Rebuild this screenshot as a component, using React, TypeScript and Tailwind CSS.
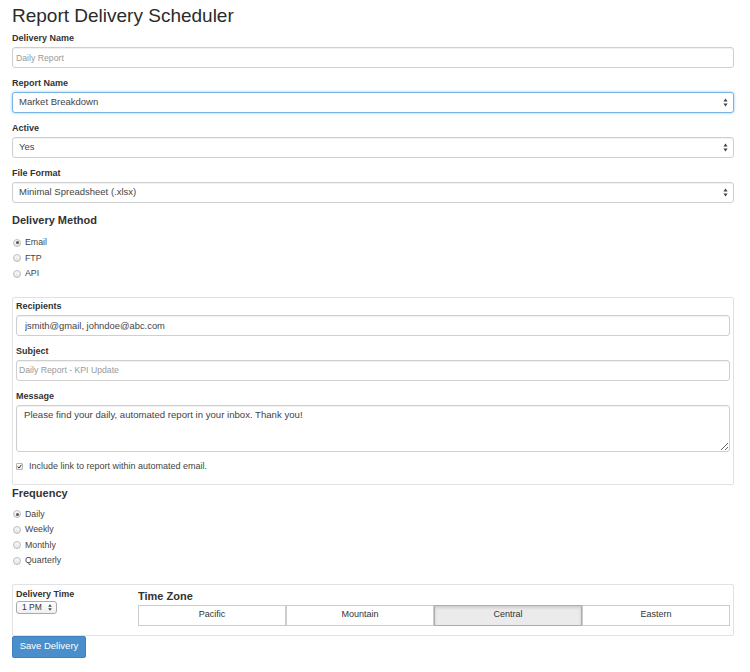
import type { ReactNode } from 'react';

const inputBox =
  'w-full h-[21px] border border-[#cfcfcf] rounded-[3px] bg-white shadow-[inset_0_1px_1px_rgba(0,0,0,0.06)]';

const Label = ({ children, className = '' }: { children: ReactNode; className?: string }) => (
  <div className={`text-[9px] leading-[12px] font-bold text-[#333] ${className}`}>{children}</div>
);

const Arrows = () => (
  <svg width="5" height="9" viewBox="0 0 5 9" className="shrink-0">
    <path d="M2.5 0.5 L4.6 3.6 L0.4 3.6 Z" fill="#444" />
    <path d="M2.5 8.5 L4.6 5.4 L0.4 5.4 Z" fill="#444" />
  </svg>
);

const Select = ({ value, focused = false }: { value: string; focused?: boolean }) => (
  <div
    className={`flex items-center justify-between h-[21px] pl-[6px] pr-[5px] rounded-[3px] bg-white text-[9.5px] text-[#444] ${
      focused
        ? 'border border-[#7ab4e4] shadow-[0_0_3px_rgba(102,175,233,0.7)]'
        : 'border border-[#cfcfcf] shadow-[inset_0_1px_1px_rgba(0,0,0,0.06)]'
    }`}
  >
    <span>{value}</span>
    <Arrows />
  </div>
);

const Radio = ({ label, checked = false }: { label: string; checked?: boolean }) => (
  <div className="flex items-center h-[15.5px] pl-[1px]">
    <span className="flex items-center justify-center w-[8px] h-[8px] rounded-full border border-[#bdbdbd] bg-gradient-to-b from-[#fafafa] to-[#e4e4e4]">
      {checked && <span className="w-[3px] h-[3px] rounded-full bg-[#555]" />}
    </span>
    <span className="ml-[4px] text-[8.8px] text-[#444]">{label}</span>
  </div>
);

const Heading = ({ children }: { children: ReactNode }) => (
  <div className="text-[11px] leading-[14px] font-bold text-[#333]">{children}</div>
);

const zones = ['Pacific', 'Mountain', 'Central', 'Eastern'];

export default function App() {
  return (
    <div className="w-[750px] min-h-[672px] bg-white pl-[12px] pr-[16px] pt-[3px] pb-[14px] text-[#333] font-['Liberation_Sans',Arial,sans-serif]">
      <h1 className="text-[19px] leading-[26px] font-normal text-[#2b2b2b]">Report Delivery Scheduler</h1>

      <Label className="mt-[3px]">Delivery Name</Label>
      <input
        readOnly
        placeholder="Daily Report"
        className={`${inputBox} mt-[3px] block px-[3px] text-[8.7px] outline-none placeholder:text-[#9a9a9a]`}
      />

      <Label className="mt-[9px]">Report Name</Label>
      <div className="mt-[3px]">
        <Select value="Market Breakdown" focused />
      </div>

      <Label className="mt-[9px]">Active</Label>
      <div className="mt-[3px]">
        <Select value="Yes" />
      </div>

      <Label className="mt-[9px]">File Format</Label>
      <div className="mt-[3px]">
        <Select value="Minimal Spreadsheet (.xlsx)" />
      </div>

      <div className="mt-[10px]">
        <Heading>Delivery Method</Heading>
      </div>
      <div className="mt-[8px] flex flex-col">
        <Radio label="Email" checked />
        <Radio label="FTP" />
        <Radio label="API" />
      </div>

      {/* Email settings */}
      <div className="mt-[15px] border border-[#e2e2e2] rounded-[2px] px-[3px] pt-[2px] pb-[11px]">
        <Label>Recipients</Label>
        <input
          readOnly
          value="jsmith@gmail, johndoe@abc.com"
          className={`${inputBox} mt-[3px] block pl-[8px] text-[9.4px] text-[#444] outline-none`}
        />
        <Label className="mt-[9px]">Subject</Label>
        <input
          readOnly
          placeholder="Daily Report - KPI Update"
          className={`${inputBox} mt-[3px] block pl-[2px] text-[8.7px] outline-none placeholder:text-[#9a9a9a]`}
        />
        <Label className="mt-[9px]">Message</Label>
        <textarea
          readOnly
          value="Please find your daily, automated report in your inbox. Thank you!"
          className="mt-[3px] block w-full h-[47px] border border-[#cfcfcf] rounded-[3px] bg-white pl-[7px] pt-[3px] text-[9.6px] leading-[12px] text-[#444] outline-none shadow-[inset_0_1px_1px_rgba(0,0,0,0.06)]"
        />
        <div className="mt-[9px] flex items-center h-[12px]">
          <span className="flex items-center justify-center w-[7px] h-[7px] rounded-[1px] border border-[#b5b5b5] bg-gradient-to-b from-white to-[#e6e6e6]">
            <svg width="5" height="5" viewBox="0 0 5 5">
              <path d="M0.6 2.6 L2 4 L4.4 0.8" fill="none" stroke="#333" strokeWidth="1" />
            </svg>
          </span>
          <span className="ml-[6px] text-[9px] text-[#444]">Include link to report within automated email.</span>
        </div>
      </div>

      <div className="mt-[1px]">
        <Heading>Frequency</Heading>
      </div>
      <div className="mt-[7px] flex flex-col">
        <Radio label="Daily" checked />
        <Radio label="Weekly" />
        <Radio label="Monthly" />
        <Radio label="Quarterly" />
      </div>

      {/* Schedule */}
      <div className="mt-[15px] flex border border-[#e2e2e2] rounded-[2px] pl-[3px] pr-[3px] pt-[3px] pb-[9px]">
        <div className="w-[122px] shrink-0">
          <Label>Delivery Time</Label>
          <div className="mt-[1px] flex items-center justify-between w-[41px] h-[13px] pl-[5px] pr-[4px] border border-[#a9a9a9] rounded-[3px] bg-gradient-to-b from-white to-[#f0f0f0] text-[8.5px] text-[#333]">
            <span>1 PM</span>
            <svg width="4" height="7" viewBox="0 0 4 7">
              <path d="M2 0.3 L3.8 2.8 L0.2 2.8 Z" fill="#444" />
              <path d="M2 6.7 L3.8 4.2 L0.2 4.2 Z" fill="#444" />
            </svg>
          </div>
        </div>
        <div className="flex-1">
          <div className="mt-[1px]">
            <Heading>Time Zone</Heading>
          </div>
          <div className="mt-[2px] grid grid-cols-4">
            {zones.map((z) => (
              <div
                key={z}
                className={`h-[21px] flex items-center justify-center text-[9px] text-[#333] border ${
                  z === 'Central'
                    ? 'bg-[#ebebeb] border-[#adadad] shadow-[inset_0_2px_3px_rgba(0,0,0,0.12)]'
                    : 'bg-white border-[#cccccc]'
                }`}
              >
                {z}
              </div>
            ))}
          </div>
        </div>
      </div>

      <button className="block w-[74px] h-[22px] rounded-[2px] bg-[#4a8fcb] border border-[#3f82bf] text-white text-[9.5px] font-medium">
        Save Delivery
      </button>
    </div>
  );
}
